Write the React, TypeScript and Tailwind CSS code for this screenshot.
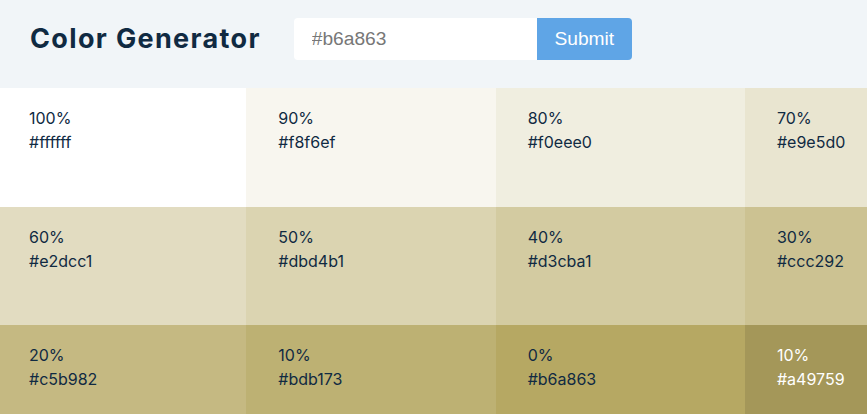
import React, { useState } from "react";

type Shade = {
    weight: string;
    hex: string;
    light?: boolean;
};

const shades: Shade[] = [
    { weight: "100%", hex: "#ffffff" },
    { weight: "90%", hex: "#f8f6ef" },
    { weight: "80%", hex: "#f0eee0" },
    { weight: "70%", hex: "#e9e5d0" },
    { weight: "60%", hex: "#e2dcc1" },
    { weight: "50%", hex: "#dbd4b1" },
    { weight: "40%", hex: "#d3cba1" },
    { weight: "30%", hex: "#ccc292" },
    { weight: "20%", hex: "#c5b982" },
    { weight: "10%", hex: "#bdb173" },
    { weight: "0%", hex: "#b6a863" },
    { weight: "10%", hex: "#a49759", light: true },
];

const App = () => {
    const [color, setColor] = useState("");

    return (
        <main className="w-[867px] h-[414px] overflow-hidden bg-white font-['Inter',sans-serif]">
            {/* header with the form */}
            <section className="h-[88px] bg-[#f1f5f8] flex items-start pt-[18px] pl-[30px] gap-[33px]">
                <h3 className="h-[42px] flex items-center text-[27px] font-bold tracking-[0.05em] text-[#102a42]">
                    Color Generator
                </h3>
                <form className="flex h-[42px]" onSubmit={(e) => e.preventDefault()}>
                    <input
                        type="text"
                        value={color}
                        onChange={(e) => setColor(e.target.value)}
                        placeholder="#b6a863"
                        className="w-[243px] h-full bg-white rounded-l-[4px] pl-[18px] text-[19.2px] font-['Liberation_Sans',Arial,sans-serif] text-[#333] placeholder:text-[#777] outline-none"
                    />
                    <button
                        type="submit"
                        className="w-[95px] h-full bg-[#5fa5e6] text-white rounded-r-[4px] text-[19.2px] font-['Liberation_Sans',Arial,sans-serif]"
                    >
                        Submit
                    </button>
                </form>
            </section>
            {/* shades grid */}
            <section className="grid grid-cols-[repeat(4,249.33px)] auto-rows-[118.5px] -ml-[3px]">
                {shades.map((s, i) => (
                    <article
                        key={i}
                        className={`px-8 pt-[18px] text-[16px] leading-6 ${s.light ? "text-white" : "text-[#102a42]"}`}
                        style={{ backgroundColor: s.hex }}
                    >
                        <p>{s.weight}</p>
                        <p>{s.hex}</p>
                    </article>
                ))}
            </section>
        </main>
    );
};

export default App;
